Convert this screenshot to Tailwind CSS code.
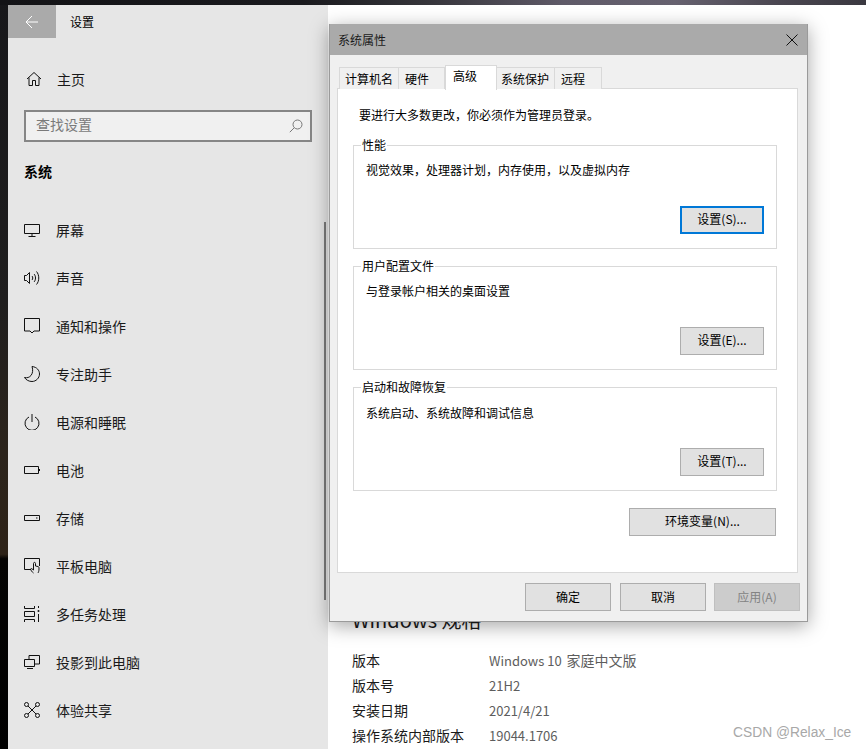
<!DOCTYPE html>
<html lang="zh-CN">
<head>
    <meta charset="UTF-8">
    <title>系统属性</title>
    <script src="https://cdn.jsdelivr.net/npm/@tailwindcss/browser@4"></script>
</head>
<body class="bg-[#17171b] overflow-hidden font-['Noto_Sans_CJK_SC','Noto_Sans',sans-serif] text-[14px] text-[#1a1a1a]">
<div class="relative w-[866px] h-[749px] overflow-hidden bg-[linear-gradient(180deg,#17171a_0%,#1f1e1e_40%,#2c241c_60%,#2e2318_74%,#050403_74.6%,#000_100%)]">
    <!-- wallpaper strip on top -->
    <div class="h-[5px] bg-[linear-gradient(90deg,#131316,#1a1a1e_35%,#37363c_50%,#5f5a68_65%,#66616f_78%,#4a4650_90%,#3a3840)]"></div>
    <div class="flex h-[744px] ml-[8px]">
        <!-- settings sidebar -->
        <div class="relative w-[320px] bg-[#e6e6e6] shrink-0">
            <div class="flex items-center h-[33px]">
                <div class="w-[48px] h-[33px] bg-[#aaaaaa] flex items-center justify-center">
                    <svg width="14" height="14" viewBox="0 0 14 14" fill="none" stroke="#fff" stroke-width="1"><path d="M13 7H1M7 1L1 7l6 6"/></svg>
                </div>
                <span class="ml-[14px] text-[12px] text-black">设置</span>
            </div>
            <div class="flex items-center h-[48px] mt-[17px] pl-[18px]">
                <svg width="16" height="16" viewBox="0 0 16 16" fill="none" stroke="#111" stroke-width="1"><path d="M1 8L8 1.500 15 8M3 6.500V14.500H6.500V9.500H9.500V14.500H13V6.500"/></svg>
                <span class="ml-[15px]">主页</span>
            </div>
            <div class="flex items-center justify-between h-[32px] mt-[7px] mx-[16px] w-[288px] border-2 border-[#868686] bg-[#f0f0f0] pl-[10px] pr-[7px]">
                <span class="text-[#7a7a7a] pb-[3px]">查找设置</span>
                <svg width="14" height="14" viewBox="0 0 14 14" fill="none" stroke="#777" stroke-width="1"><circle cx="8.500" cy="5.500" r="4.500"/><path d="M5.200 8.800L.8 13.200"/></svg>
            </div>
            <div class="mt-[19px] ml-[16px] h-[21px] leading-[20px] font-bold text-black">系统</div>

            <div class="mt-[24px] flex flex-col">
                <div class="flex items-center h-[48px] pl-[16px]">
                    <svg class="w-[16px] h-[16px] shrink-0" viewBox="0 0 16 16" fill="none" stroke="#111" stroke-width="1"><path d="M.5 2.500h15v9H.5zM8 11.500v3M4.500 14.500h7"/></svg>
                    <span class="ml-[16px]">屏幕</span>
                </div>
                <div class="flex items-center h-[48px] pl-[16px]">
                    <svg class="w-[16px] h-[16px] shrink-0" viewBox="0 0 16 16" fill="none" stroke="#111" stroke-width="1"><path d="M.5 5.500h2l3-3v11l-3-3h-2zM8 6c1 1 1 3 0 4M10 4c2 2 2 6 0 8M12.500 1.500c3 3.500 3 9.500 0 13"/></svg>
                    <span class="ml-[16px]">声音</span>
                </div>
                <div class="flex items-center h-[48px] pl-[16px]">
                    <svg class="w-[16px] h-[16px] shrink-0" viewBox="0 0 16 16" fill="none" stroke="#111" stroke-width="1"><path d="M.5 .5h15v12.500h-5.500L8 15l-2-2H.5z"/></svg>
                    <span class="ml-[16px]">通知和操作</span>
                </div>
                <div class="flex items-center h-[48px] pl-[16px]">
                    <svg class="w-[16px] h-[16px] shrink-0" viewBox="0 0 16 16" fill="none" stroke="#111" stroke-width="1"><path d="M8 .5c5 .5 7.500 4 7.500 7.500 0 4-3.500 7.500-7.500 7.500-3 0-6-1.500-7.500-4 5 1.500 10-3.500 7.500-11z"/></svg>
                    <span class="ml-[16px]">专注助手</span>
                </div>
                <div class="flex items-center h-[48px] pl-[16px]">
                    <svg class="w-[16px] h-[16px] shrink-0" viewBox="0 0 16 16" fill="none" stroke="#111" stroke-width="1"><path d="M5 3a7 7 0 1 0 6 0M8 0v8"/></svg>
                    <span class="ml-[16px]">电源和睡眠</span>
                </div>
                <div class="flex items-center h-[48px] pl-[16px]">
                    <svg class="w-[16px] h-[16px] shrink-0" viewBox="0 0 16 16" fill="none" stroke="#111" stroke-width="1"><path d="M.5 4.500h14v7H.5zM15.500 7v2"/></svg>
                    <span class="ml-[16px]">电池</span>
                </div>
                <div class="flex items-center h-[48px] pl-[16px]">
                    <svg class="w-[16px] h-[16px] shrink-0" viewBox="0 0 16 16" fill="none" stroke="#111" stroke-width="1"><path d="M.5 5.500h15v5H.5zM12 8h1.500"/></svg>
                    <span class="ml-[16px]">存储</span>
                </div>
                <div class="flex items-center h-[48px] pl-[16px]">
                    <svg class="w-[16px] h-[16px] shrink-0" viewBox="0 0 16 16" fill="none" stroke="#111" stroke-width="1"><path d="M7 11.500H.5V.5h15v7.500M9.500 15c-1.500-1-2.500-2.500-3-4l1-.5 2 1.500V5.500c0-1.500 2-1.500 2 0V8l2.500.5c1 .3 1 1 1 2.500 0 2-.5 3-1 4"/></svg>
                    <span class="ml-[16px]">平板电脑</span>
                </div>
                <div class="flex items-center h-[48px] pl-[16px]">
                    <svg class="w-[16px] h-[16px] shrink-0" viewBox="0 0 16 16" fill="none" stroke="#111" stroke-width="1"><path d="M.5 0v2.500h10V0M.5 16v-2.500h10V16M.5 5.500h10v5H.5zM14.500 8v8M14.500 0v2"/><circle cx="14.500" cy="5" r="1" fill="#111" stroke="none"/></svg>
                    <span class="ml-[16px]">多任务处理</span>
                </div>
                <div class="flex items-center h-[48px] pl-[16px]">
                    <svg class="w-[16px] h-[16px] shrink-0" viewBox="0 0 16 16" fill="none" stroke="#111" stroke-width="1"><path d="M5 5V1.500h10.500v8.500H11M.5 5.500h10v7H.5zM3 14.500h6"/></svg>
                    <span class="ml-[16px]">投影到此电脑</span>
                </div>
                <div class="flex items-center h-[48px] pl-[16px]">
                    <svg class="w-[16px] h-[16px] shrink-0" viewBox="0 0 16 16" fill="none" stroke="#111" stroke-width="1"><circle cx="2.500" cy="2.500" r="2"/><circle cx="13.500" cy="2.500" r="2"/><circle cx="2.500" cy="13.500" r="2"/><circle cx="13.500" cy="13.500" r="2"/><path d="M4 4l8 8M12 4l-8 8"/></svg>
                    <span class="ml-[16px]">体验共享</span>
                </div>
            </div>
            <!-- scrollbar -->
            <div class="absolute right-[2px] top-[217px] w-[2px] h-[378px] bg-[#7c7c7c]"></div>
        </div>

        <!-- about page, mostly hidden behind the dialog -->
        <div class="flex-1 bg-white pl-[24px] pt-[600px] text-[#1a1a1a]">
            <div class="text-[20px] leading-[30px] h-[30px]">Windows 规格</div>
            <div class="mt-[13px] flex flex-col">
                <div class="flex h-[25px] items-center"><span class="w-[137px]">版本</span><span class="text-[#5d5d5d]"><span class="text-[13px] mr-[2px]">Windows 10 </span>家庭中文版</span></div>
                <div class="flex h-[25px] items-center"><span class="w-[137px]">版本号</span><span class="text-[#5d5d5d] text-[13px]">21H2</span></div>
                <div class="flex h-[25px] items-center"><span class="w-[137px]">安装日期</span><span class="text-[#5d5d5d] text-[13px]">2021/4/21</span></div>
                <div class="flex h-[25px] items-center"><span class="w-[137px]">操作系统内部版本</span><span class="text-[#5d5d5d] text-[13px]">19044.1706</span></div>
            </div>
        </div>
    </div>

    <!-- system properties dialog -->
    <div class="absolute left-[329px] top-[24px] w-[479px] h-[598px] bg-[#f0f0f0] border border-[#9a9a9a] border-t-0 shadow-[0_4px_18px_rgba(0,0,0,0.35)] text-[12px] text-black flex flex-col">
        <div class="h-[31px] bg-[#aaaaaa] flex items-center justify-between pl-[8px] pr-[9px] shrink-0">
            <span class="text-[#1a1a1a]">系统属性</span>
            <svg width="12" height="12" viewBox="0 0 12 12" fill="none" stroke="#111" stroke-width="1"><path d="M.5 .5l11 11M11.500 .5l-11 11"/></svg>
        </div>
        <div class="h-[11px] shrink-0"></div>
        <div class="flex items-end pl-[9px] h-[23px] relative z-10 shrink-0">
            <div class="w-[60px] h-[22px] flex items-center justify-center bg-[#f0f0f0] border border-b-0 border-[#d9d9d9]">计算机名</div>
            <div class="w-[46px] h-[22px] flex items-center pl-[6px] bg-[#f0f0f0] border border-b-0 border-l-0 border-[#d9d9d9]">硬件</div>
            <div class="w-[52px] h-[25px] flex items-start pt-[1px] pl-[7px] bg-white border border-b-0 border-[#d9d9d9] -mb-[1px]">高级</div>
            <div class="w-[58px] h-[22px] flex items-center pl-[4px] bg-[#f0f0f0] border border-b-0 border-l-0 border-[#d9d9d9]">系统保护</div>
            <div class="w-[47px] h-[22px] flex items-center pl-[6px] bg-[#f0f0f0] border border-b-0 border-l-0 border-[#d9d9d9]">远程</div>
        </div>
        <div class="mx-[7px] -mt-[1px] w-[461px] h-[485px] bg-white border border-[#d9d9d9] pl-[15px] shrink-0">
            <p class="ml-[6px] mt-[17px] h-[18px] leading-[18px]">要进行大多数更改，你必须作为管理员登录。</p>

            <div class="relative mt-[21px] w-[424px] h-[104px] border border-[#d9d9d9] pl-[12px] pt-[15px]">
                <span class="absolute left-[7px] -top-[9px] bg-white px-[1px] leading-[16px]">性能</span>
                <p class="leading-[18px]">视觉效果，处理器计划，内存使用，以及虚拟内存</p>
                <div class="absolute right-[12px] bottom-[14px] w-[84px] h-[28px] flex items-center justify-center pb-[2px] bg-[#e1e1e1] border-2 border-[#0078d7]">设置(S)...</div>
            </div>
            <div class="relative mt-[17px] w-[424px] h-[104px] border border-[#d9d9d9] pl-[12px] pt-[15px]">
                <span class="absolute left-[7px] -top-[9px] bg-white px-[1px] leading-[16px]">用户配置文件</span>
                <p class="leading-[18px]">与登录帐户相关的桌面设置</p>
                <div class="absolute right-[12px] bottom-[14px] w-[84px] h-[28px] flex items-center justify-center pb-[2px] bg-[#e1e1e1] border border-[#adadad]">设置(E)...</div>
            </div>
            <div class="relative mt-[17px] w-[424px] h-[104px] border border-[#d9d9d9] pl-[12px] pt-[16px]">
                <span class="absolute left-[7px] -top-[9px] bg-white px-[1px] leading-[16px]">启动和故障恢复</span>
                <p class="leading-[18px]">系统启动、系统故障和调试信息</p>
                <div class="absolute right-[12px] bottom-[14px] w-[84px] h-[28px] flex items-center justify-center pb-[2px] bg-[#e1e1e1] border border-[#adadad]">设置(T)...</div>
            </div>
            <div class="flex justify-end w-[423px] mt-[17px]">
                <div class="w-[147px] h-[28px] flex items-center justify-center pb-[2px] bg-[#e1e1e1] border border-[#adadad]">环境变量(N)...</div>
            </div>
        </div>
        <div class="flex mt-[10px] pl-[195px] shrink-0">
            <div class="w-[86px] h-[28px] flex items-center justify-center bg-[#e1e1e1] border border-[#adadad]">确定</div>
            <div class="ml-[9px] w-[86px] h-[28px] flex items-center justify-center bg-[#e1e1e1] border border-[#adadad]">取消</div>
            <div class="ml-[8px] w-[86px] h-[28px] flex items-center justify-center bg-[#cccccc] border border-[#bfbfbf] text-[#838383]">应用(A)</div>
        </div>
    </div>

    <!-- watermark -->
    <span class="absolute left-[733px] top-[724px] text-[13.8px] leading-[18px] text-[#a8a8a8] font-['Liberation_Sans',sans-serif]">CSDN @Relax_Ice</span>
</div>
</body>
</html>
